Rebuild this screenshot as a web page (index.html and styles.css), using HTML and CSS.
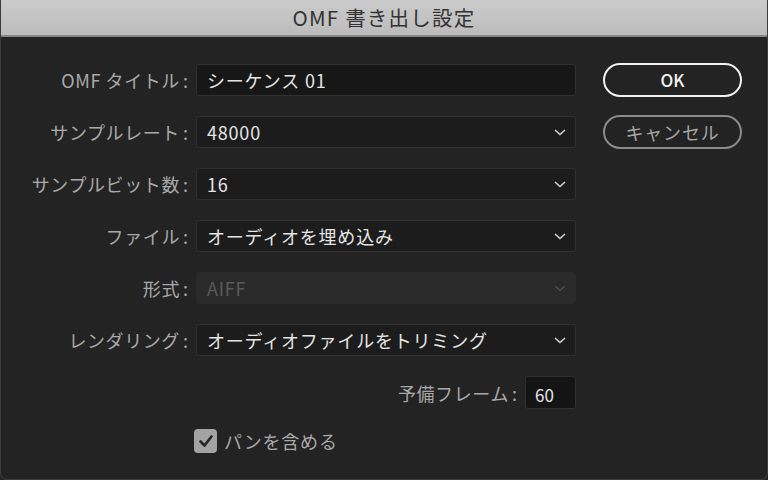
FILE: index.html
```html
<!DOCTYPE html>
<html lang="ja">
<head>
<meta charset="utf-8">
<title>OMF 書き出し設定</title>
<link rel="stylesheet" href="styles.css">
</head>
<body>
<div class="window">
  <div class="titlebar">OMF 書き出し設定</div>
  <div class="content">
    <div class="form">
      <div class="label">OMF タイトル<span class="colon">:</span></div>
      <div class="field text-input">シーケンス 01</div>

      <div class="label">サンプルレート<span class="colon">:</span></div>
      <div class="field select"><span>48000</span><svg class="chev" viewBox="0 0 12 7"><path d="M1 1 L6 5.5 L11 1"/></svg></div>

      <div class="label">サンプルビット数<span class="colon">:</span></div>
      <div class="field select"><span>16</span><svg class="chev" viewBox="0 0 12 7"><path d="M1 1 L6 5.5 L11 1"/></svg></div>

      <div class="label">ファイル<span class="colon">:</span></div>
      <div class="field select"><span>オーディオを埋め込み</span><svg class="chev" viewBox="0 0 12 7"><path d="M1 1 L6 5.5 L11 1"/></svg></div>

      <div class="label">形式<span class="colon">:</span></div>
      <div class="field select disabled"><span>AIFF</span><svg class="chev" viewBox="0 0 12 7"><path d="M1 1 L6 5.5 L11 1"/></svg></div>

      <div class="label">レンダリング<span class="colon">:</span></div>
      <div class="field select"><span>オーディオファイルをトリミング</span><svg class="chev" viewBox="0 0 12 7"><path d="M1 1 L6 5.5 L11 1"/></svg></div>

      <div class="reserve">
        <div class="label">予備フレーム<span class="colon">:</span></div>
        <div class="num-input">60</div>
      </div>

      <div class="check-row">
        <span class="checkbox"><svg viewBox="0 0 22 22"><path d="M5.5 11.5 L9.5 15.5 L16.5 6.5"/></svg></span>
        <span class="check-label">パンを含める</span>
      </div>
    </div>
    <div class="buttons">
      <div class="btn primary">OK</div>
      <div class="btn secondary">キャンセル</div>
    </div>
  </div>
</div>
</body>
</html>
```
FILE: styles.css
```css
html, body {
  margin: 0;
  padding: 0;
  background: #232323;
}
body {
  font-family: "Noto Sans CJK JP", "Noto Sans", sans-serif;
}
.window {
  width: 768px;
  height: 480px;
  box-sizing: border-box;
  background: #232323;
  border: 1px solid #3c3c3c;
  border-top: none;
  border-radius: 0 0 7px 7px;
  overflow: hidden;
}
.titlebar {
  height: 35px;
  background: linear-gradient(#cbcbcb, #bcbcbc);
  border-bottom: 2px solid #858585;
  color: #333;
  font-size: 20.5px;
  line-height: 35px;
  text-align: center;
  letter-spacing: 1.2px;
}
.content {
  display: flex;
  align-items: flex-start;
  padding-top: 27px;
}
.form {
  display: grid;
  grid-template-columns: 187px 380px;
  grid-auto-rows: 32px;
  column-gap: 8px;
  row-gap: 20px;
}
.label {
  color: #a9a9a9;
  font-size: 18px;
  letter-spacing: 0.6px;
  text-align: right;
  line-height: 32px;
  white-space: nowrap;
}
.colon {
  margin-left: 3px;
  letter-spacing: 0;
}
.field {
  box-sizing: border-box;
  height: 32px;
  border: 1px solid #313131;
  border-radius: 3px;
  color: #e4e4e4;
  font-size: 18px;
  letter-spacing: 0.8px;
  line-height: 30px;
  padding-left: 10px;
  white-space: nowrap;
}
.text-input {
  background: #171717;
}
.select {
  display: flex;
  align-items: center;
  justify-content: space-between;
  padding-right: 9px;
  background: #1c1c1c;
}
.select.disabled {
  background: #2a2a2a;
  border-color: #2a2a2a;
  color: #595959;
}
.chev {
  width: 12px;
  height: 7px;
  fill: none;
  stroke: #d0d0d0;
  stroke-width: 1.6;
}
.disabled .chev {
  stroke: #4a4a4a;
}
.reserve {
  grid-column: 1 / 3;
  display: flex;
  justify-content: flex-end;
  align-items: center;
  gap: 8px;
  height: 33px;
}
.num-input {
  box-sizing: border-box;
  width: 51px;
  height: 33px;
  background: #141414;
  border: 1px solid #303030;
  border-radius: 3px;
  color: #e4e4e4;
  font-size: 17px;
  line-height: 30px;
  padding: 3px 0 0 9px;
}
.check-row {
  grid-column: 2;
  display: flex;
  align-items: center;
  margin-left: -2px;
  margin-top: -3px;
  height: 32px;
}
.checkbox {
  width: 23px;
  height: 24px;
  background: #a3a3a3;
  border-radius: 4px;
  display: flex;
  align-items: center;
  justify-content: center;
}
.checkbox svg {
  width: 22px;
  height: 22px;
  fill: none;
  stroke: #262626;
  stroke-width: 2.6;
  stroke-linecap: round;
  stroke-linejoin: round;
}
.check-label {
  margin-left: 7px;
  color: #a9a9a9;
  font-size: 18px;
  letter-spacing: 0.8px;
}
.buttons {
  margin-left: 27px;
  display: flex;
  flex-direction: column;
  gap: 18px;
  margin-top: -1px;
}
.btn {
  box-sizing: border-box;
  width: 139px;
  height: 34px;
  border-radius: 17px;
  text-align: center;
  font-size: 17px;
  line-height: 30px;
}
.btn.primary {
  border: 2px solid #f0f0f0;
  color: #f4f4f4;
  font-weight: 500;
}
.btn.secondary {
  border: 2px solid #8a8a8a;
  color: #a6a6a6;
  font-size: 18px;
  letter-spacing: 0.8px;
}
```
